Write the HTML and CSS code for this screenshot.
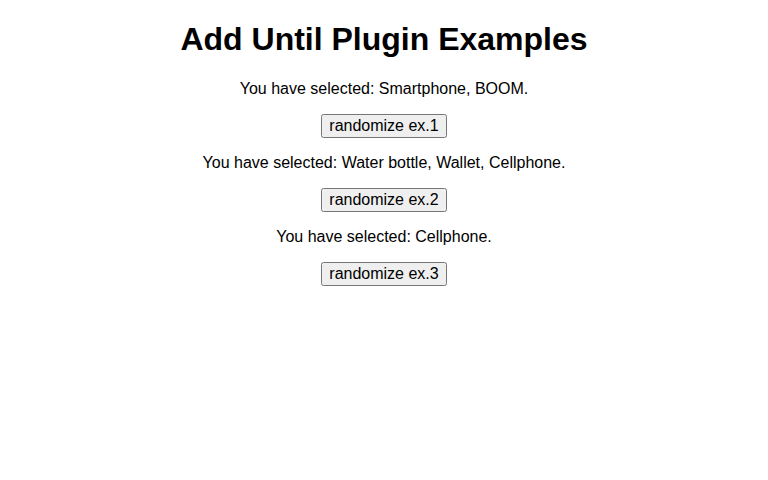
FILE: index.html
```html
<!DOCTYPE html>
<html lang="en">
<head>
    <meta charset="UTF-8">
    <meta name="viewport" content="width=device-width, initial-scale=1.0">
    <title>Add Until Plugin Examples</title>
    <link rel="stylesheet" href="styles.css">
</head>
<body>

    <h1>Add Until Plugin Examples</h1>

    <!-- Example 1 -->
    <p class="selected">You have selected: Smartphone, BOOM.</p>
    <div class="actions">
        <button type="button">randomize ex.1</button>
    </div>

    <!-- Example 2 -->
    <p class="selected">You have selected: Water bottle, Wallet, Cellphone.</p>
    <div class="actions">
        <button type="button">randomize ex.2</button>
    </div>

    <!-- Example 3 -->
    <p class="selected">You have selected: Cellphone.</p>
    <div class="actions">
        <button type="button">randomize ex.3</button>
    </div>

</body>
</html>
```
FILE: styles.css
```css
body {
    font-family: "Liberation Sans", Arial, sans-serif;
    color: #000;
    background-color: #fff;
    text-align: center;
    margin: 0 8px;
}

h1 {
    font-size: 32px;
}

.selected {
    font-size: 16px;
}

button {
    font-family: inherit;
    font-size: 16px;
}
```
